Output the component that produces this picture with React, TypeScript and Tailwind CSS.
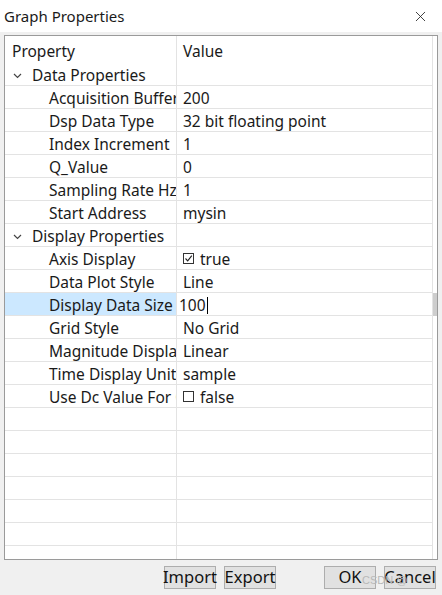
import { X } from 'lucide-react';

type Row = { label: string; value?: string; kind?: 'group' | 'check' | 'edit'; checked?: boolean };

const rows: Row[] = [
  { label: 'Data Properties', kind: 'group' },
  { label: 'Acquisition Buffer Size', value: '200' },
  { label: 'Dsp Data Type', value: '32 bit floating point' },
  { label: 'Index Increment', value: '1' },
  { label: 'Q_Value', value: '0' },
  { label: 'Sampling Rate Hz', value: '1' },
  { label: 'Start Address', value: 'mysin' },
  { label: 'Display Properties', kind: 'group' },
  { label: 'Axis Display', value: 'true', kind: 'check', checked: true },
  { label: 'Data Plot Style', value: 'Line' },
  { label: 'Display Data Size', value: '100', kind: 'edit' },
  { label: 'Grid Style', value: 'No Grid' },
  { label: 'Magnitude Display Scale', value: 'Linear' },
  { label: 'Time Display Unit', value: 'sample' },
  { label: 'Use Dc Value For Graph', value: 'false', kind: 'check', checked: false },
];

function Chevron() {
  return (
    <svg width="9" height="6" viewBox="0 0 9 6" className="mr-[10px] ml-[8px]">
      <path d="M1 1 L4.5 4.5 L8 1" fill="none" stroke="#444" strokeWidth="1.2" />
    </svg>
  );
}

function CheckBox({ checked }: { checked?: boolean }) {
  return (
    <span className="w-[11px] h-[11px] border border-[#333] bg-white flex items-center justify-center mr-[6px] mb-[3px]">
      {checked && (
        <svg width="9" height="9" viewBox="0 0 9 9">
          <path d="M1.5 4.5 L3.7 6.8 L7.8 1.6" fill="none" stroke="#222" strokeWidth="1.1" />
        </svg>
      )}
    </span>
  );
}

function PropRow({ row }: { row: Row }) {
  if (row.kind === 'group') {
    return (
      <div className="flex h-[23px] shrink-0 border-b border-[#e3e3e3]">
        <div className="w-[172px] shrink-0 flex items-center pt-[3px] border-r border-[#e3e3e3] whitespace-nowrap">
          <Chevron />
          <span>{row.label}</span>
        </div>
        <div className="flex-1" />
      </div>
    );
  }
  const editing = row.kind === 'edit';
  return (
    <div className="flex h-[23px] shrink-0 border-b border-[#e3e3e3]">
      <div
        className={`w-[172px] shrink-0 flex items-center pl-[44px] pt-[3px] border-r border-[#e3e3e3] whitespace-nowrap overflow-hidden ${
          editing ? 'bg-[#cce8ff]' : ''
        }`}
      >
        {row.label}
      </div>
      <div className={`flex-1 flex items-center pt-[3px] ${editing ? 'pl-[2px]' : 'pl-[6px]'}`}>
        {row.kind === 'check' && <CheckBox checked={row.checked} />}
        <span>{row.value}</span>
        {editing && <span className="w-px h-[17px] bg-black ml-px" />}
      </div>
    </div>
  );
}

function Btn({ children }: { children: React.ReactNode }) {
  return (
    <button className="w-[52px] h-[23px] bg-[#e1e1e1] border border-[#adadad] text-[16.5px] leading-none text-[#111] flex items-center justify-center">
      {children}
    </button>
  );
}

export default function App() {
  return (
    <div className="w-[442px] h-[595px] bg-[#f0f0f0] flex flex-col text-[#1a1a1a] font-['Noto_Sans',sans-serif] text-[15.5px]">
      {/* Title bar */}
      <div className="h-[32px] bg-white flex items-center justify-between pl-[4px] pr-[13px]">
        <span className="text-[15px]">Graph Properties</span>
        <X className="w-[17px] h-[17px] text-[#222]" strokeWidth={1.2} />
      </div>

      {/* Property grid */}
      <div className="mt-[3px] mx-[4px] h-[525px] border border-[#9a9a9a] bg-white flex overflow-hidden">
        <div className="flex-1 flex flex-col">
          <div className="flex h-[27px] shrink-0">
            <div className="w-[172px] shrink-0 flex items-center pl-[7px] pt-[4px] border-r border-[#e3e3e3]">Property</div>
            <div className="flex-1 flex items-center pl-[6px] pt-[4px]">Value</div>
          </div>
          {rows.map((r) => (
            <PropRow key={r.label} row={r} />
          ))}
          {Array.from({ length: 7 }).map((_, i) => (
            <div key={i} className="flex h-[23px] border-b border-[#e3e3e3] shrink-0">
              <div className="w-[172px] shrink-0 border-r border-[#e3e3e3]" />
              <div className="flex-1" />
            </div>
          ))}
        </div>
        {/* thin scrollbar */}
        <div className="w-[5px] border-l border-[#e3e3e3] flex flex-col">
          <div className="h-[257px] shrink-0" />
          <div className="h-[23px] shrink-0 bg-[#cdcdcd]" />
        </div>
      </div>

      {/* Buttons */}
      <div className="relative flex items-center mt-[6px] pl-[164px] gap-[8px]">
        <Btn>Import</Btn>
        <Btn>Export</Btn>
        <div className="w-[32px]" />
        <Btn>OK</Btn>
        <Btn>Cancel</Btn>
        <span className="absolute left-[362px] top-[6px] text-[11px] text-[#b8b8b8] font-['Liberation_Sans',sans-serif]">
          CSDN @
        </span>
      </div>
    </div>
  );
}
